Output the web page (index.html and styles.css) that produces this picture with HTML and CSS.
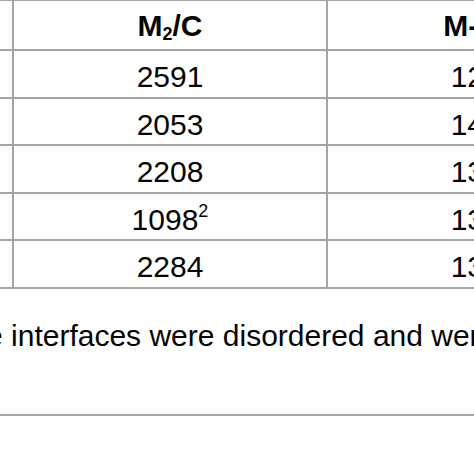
FILE: index.html
```
<!DOCTYPE html>
<html>
<head>
<meta charset="utf-8">
<link rel="stylesheet" href="styles.css">
</head>
<body>
<div class="page">
  <div class="shift">
    <table class="data">
      <thead>
        <tr class="head">
          <th class="c0">Interface</th>
          <th class="c1">M<sub>2</sub>/C</th>
          <th class="c2">M-MC</th>
        </tr>
      </thead>
      <tbody>
        <tr class="r46"><td class="c0">A</td><td class="c1">2591</td><td class="c2">1284</td></tr>
        <tr class="r45"><td class="c0">B</td><td class="c1">2053</td><td class="c2">1432</td></tr>
        <tr class="r46"><td class="c0">C</td><td class="c1">2208</td><td class="c2">1376</td></tr>
        <tr class="r45"><td class="c0">D</td><td class="c1">1098<sup>2</sup></td><td class="c2">1351</td></tr>
        <tr class="r46"><td class="c0">E</td><td class="c1">2284</td><td class="c2">1390</td></tr>
      </tbody>
    </table>
  </div>
  <p class="note">the interfaces were disordered and were not considered</p>
  <div class="rule"></div>
</div>
</body>
</html>
```
FILE: styles.css
```
html, body {
  margin: 0;
  padding: 0;
  background: #ffffff;
}
body {
  width: 474px;
  height: 474px;
  overflow: hidden;
  font-family: "Liberation Sans", Arial, sans-serif;
  color: #050505;
}
.page {
  width: 474px;
  overflow: hidden;
}
.shift {
  margin-left: -186px;
}
.data {
  border-collapse: separate;
  border-spacing: 0;
  table-layout: fixed;
  width: 826px;
  border-top: 1px solid #a4a4a4;
}
.data th,
.data td {
  font-size: 30px;
  line-height: 30px;
  text-align: center;
  vertical-align: top;
  padding: 0;
  border-bottom: 2px solid #a4a4a4;
  border-right: 2px solid #a4a4a4;
  white-space: nowrap;
  color: #050505;
}
.data th {
  font-weight: bold;
}
.data .c0 {
  width: 198px;
  color: transparent;
}
.data .c1 {
  width: 312px;
}
.data .c2 {
  width: 312px;
  border-right: none;
}
.head th {
  padding-top: 10px;
  height: 38px;
}
.r46 td {
  padding-top: 11px;
  height: 35px;
}
.r45 td {
  padding-top: 11px;
  height: 34px;
}
sub {
  font-size: 18px;
  line-height: 0;
  vertical-align: -4px;
}
sup {
  font-size: 18px;
  line-height: 0;
  vertical-align: 13px;
}
.note {
  margin: 32px 0 0 -39px;
  font-size: 30px;
  line-height: 30px;
  white-space: nowrap;
  height: 30px;
}
.rule {
  margin-top: 63px;
  height: 2px;
  background: #a4a4a4;
}
```
